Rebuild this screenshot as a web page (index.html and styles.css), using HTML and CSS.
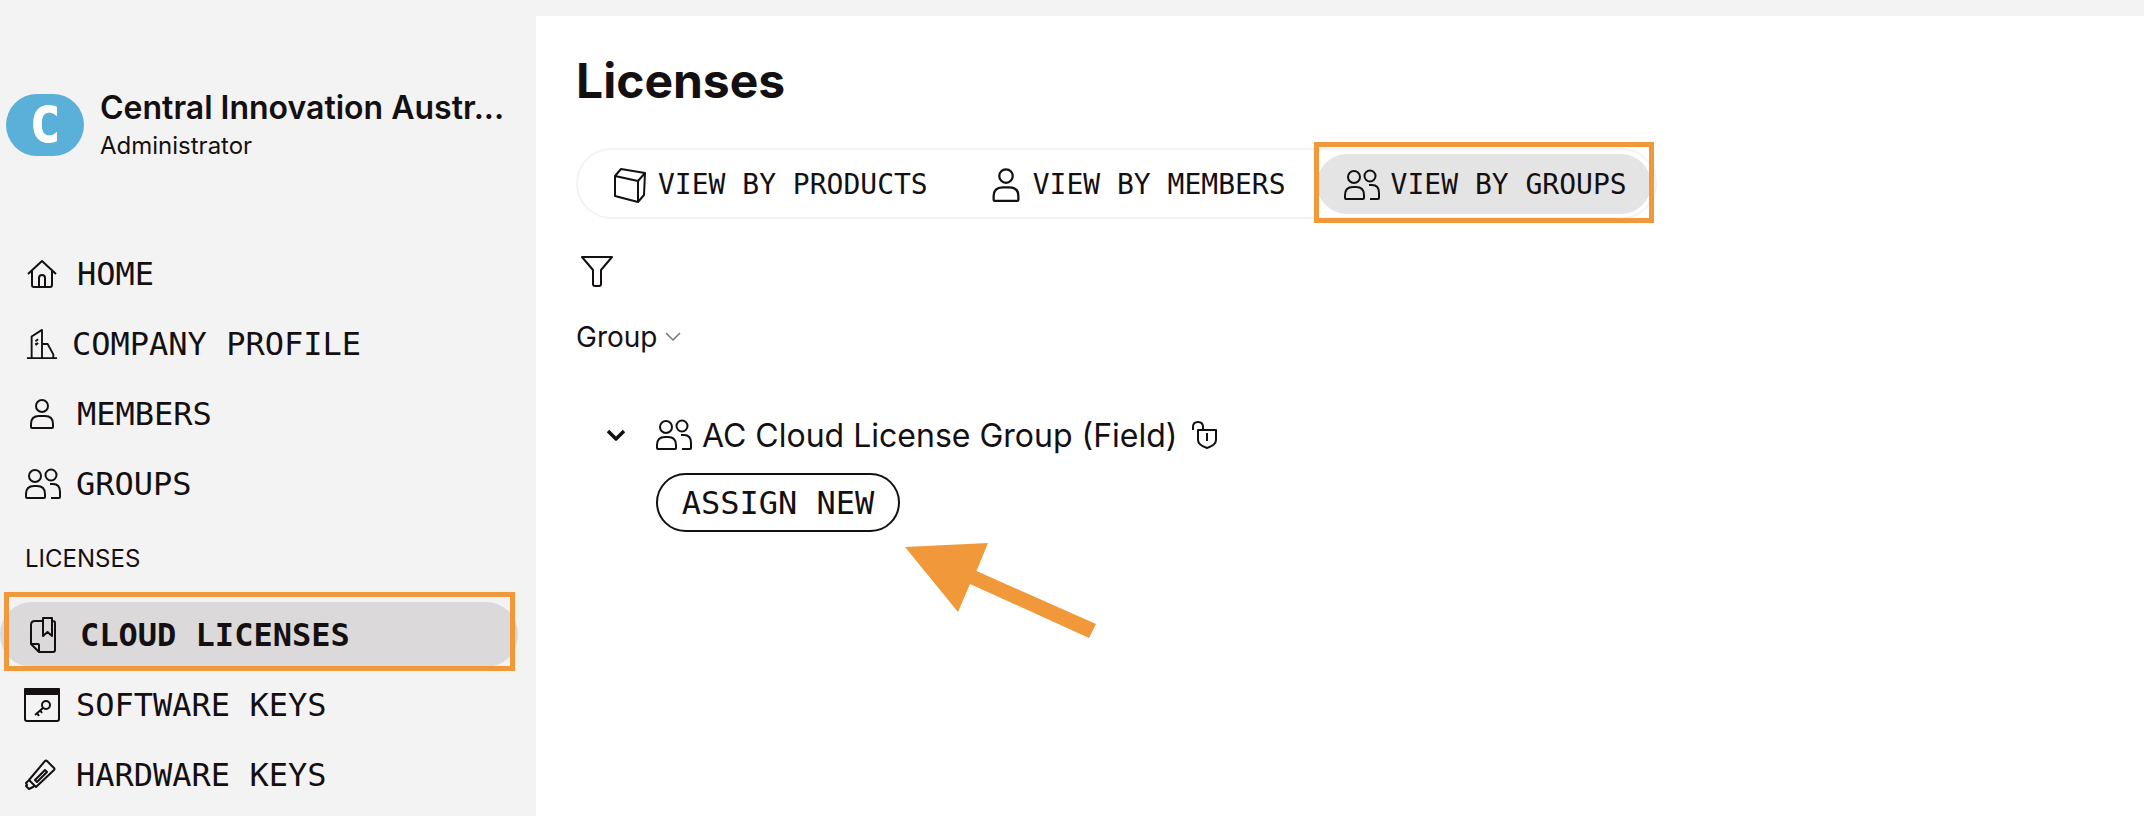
FILE: index.html
```html
<!DOCTYPE html>
<html lang="en">
<head>
    <meta charset="UTF-8">
    <title>Licenses</title>
    <link rel="stylesheet" href="styles.css">
</head>
<body>
    <div class="app">
        <aside class="sidebar">
            <div class="account">
                <div class="avatar">C</div>
                <div class="account-text">
                    <div class="account-name">Central Innovation Austr...</div>
                    <div class="account-role">Administrator</div>
                </div>
            </div>
            <nav class="nav">
                <a class="nav-item">
                    <svg class="icon" viewBox="0 0 32 32"><path d="M2 16 16 3l14 13M6 13v14q0 2 2 2h16q2 0 2-2V13M13 29v-9q0-3 3-3t3 3v9"/></svg>
                    HOME
                </a>
                <a class="nav-item nav-item-tight">
                    <svg class="icon icon-wide" viewBox="0 0 34 32"><path d="M1 31h32M6 31V8L17 1v30M17 16l6 0 6 11v4M10 13l3-2M10 17l3-2M10 15l2 2"/></svg>
                    COMPANY PROFILE
                </a>
                <a class="nav-item">
                    <svg class="icon" viewBox="0 0 32 32"><circle cx="16" cy="8" r="6"/><path d="M5 29v-3q0-8 8-8h6q8 0 8 8v3q0 1-1 1H6q-1 0-1-1z"/></svg>
                    MEMBERS
                </a>
                <a class="nav-item nav-item-wide">
                    <svg class="icon-groups" viewBox="0 0 38 32"><circle cx="11" cy="8" r="6"/><circle cx="27" cy="7" r="5.5"/><path d="M2 29v-3q0-8 8-8h3q8 0 8 8v3q0 1-1 1H3q-1 0-1-1zM26 16h3q7 0 7 8v5q0 1-1 1h-8"/></svg>
                    GROUPS
                </a>
                <div class="nav-heading">LICENSES</div>
                <a class="nav-item nav-item-active">
                    <svg class="icon-book" viewBox="0 0 26 36"><path d="M13 4H5Q1 4 1 8v19l8 8h14q2 0 2-2V6q0-2-2-2h-1M9 35v-7q0-1-1-1H1M13 1h9v18l-4.500-4-4.500 4z"/></svg>
                    CLOUD LICENSES
                </a>
                <a class="nav-item nav-item-software">
                    <svg class="icon-window" viewBox="0 0 36 34"><rect x="1" y="1" width="34" height="32" rx="2"/><path class="icon-bar" d="M1 1h34v5H1z"/><circle cx="22" cy="17" r="4"/><path d="m19 20-8 7M13 25l2 3M16 22l2 3"/></svg>
                    SOFTWARE KEYS
                </a>
                <a class="nav-item nav-item-hardware">
                    <svg class="icon" viewBox="0 0 32 32"><path d="m23 2 7 7q1 1 0 2L12 28l-7-7L21 2q1-1 2 0zM5 21l-3 3 1 2-1 1 3 3 2-1 2-1 2-2M11 21l10-10 2 2-10 10z"/></svg>
                    HARDWARE KEYS
                </a>
            </nav>
        </aside>
        <main class="content">
            <h1 class="title">Licenses</h1>
            <div class="tabs">
                <a class="tab tab-products">
                    <svg class="icon-tab" viewBox="0 0 36 36"><path d="M9 2 33 6l-1 22-6 7L3 29V9zM3 9l23 5 7-8M26 14v21"/></svg>
                    VIEW BY PRODUCTS
                </a>
                <a class="tab tab-members">
                    <svg class="icon-tab" viewBox="0 0 32 32"><circle cx="16" cy="8" r="6"/><path d="M5 29v-3q0-8 8-8h6q8 0 8 8v3q0 1-1 1H6q-1 0-1-1z"/></svg>
                    VIEW BY MEMBERS
                </a>
                <a class="tab tab-active">
                    <svg class="icon-groups" viewBox="0 0 38 32"><circle cx="11" cy="8" r="6"/><circle cx="27" cy="7" r="5.5"/><path d="M2 29v-3q0-8 8-8h3q8 0 8 8v3q0 1-1 1H3q-1 0-1-1zM26 16h3q7 0 7 8v5q0 1-1 1h-8"/></svg>
                    VIEW BY GROUPS
                </a>
            </div>
            <svg class="icon-filter" viewBox="0 0 32 32"><path d="M1 2h30L20 15v14q0 2-2 2h-4q-2 0-2-2V15z"/></svg>
            <div class="sort">Group
                <svg class="sort-chevron" viewBox="0 0 16 10"><path d="m1 1 7 7 7-7"/></svg>
            </div>
            <div class="group-row">
                <svg class="row-chevron" viewBox="0 0 20 12"><path d="m2 2 8 8 8-8"/></svg>
                <svg class="icon-groups" viewBox="0 0 38 32"><circle cx="11" cy="8" r="6"/><circle cx="27" cy="7" r="5.5"/><path d="M2 29v-3q0-8 8-8h3q8 0 8 8v3q0 1-1 1H3q-1 0-1-1zM26 16h3q7 0 7 8v5q0 1-1 1h-8"/></svg>
                <span class="group-name">AC Cloud License Group (Field)</span>
                <svg class="icon-lock" viewBox="0 0 26 28"><path d="M1 9V6q0-5 5-5t5 5v3M6 9h18v10q0 5-9 8-9-3-9-8zM15 12v8"/></svg>
            </div>
            <button class="assign">ASSIGN NEW</button>
        </main>
    </div>

    <!-- annotations on top of the screenshot -->
    <div class="mark mark-nav"></div>
    <div class="mark mark-tab"></div>
    <svg class="arrow" viewBox="0 0 200 100"><path d="M0 5 83 1 71.500 29 191 82 184 96 65 42 53 70z"/></svg>
</body>
</html>
```
FILE: styles.css
```css
* {
    box-sizing: border-box;
}
html, body {
    margin: 0;
    height: 100%;
    overflow: hidden;
}
body {
    background-color: #f3f3f3;
    color: #141012;
    font-family: Inter, sans-serif;
    padding-top: 16px;
}
.app {
    display: flex;
    height: 800px;
}
svg {
    fill: none;
    stroke: #141012;
    stroke-width: 2;
    stroke-linejoin: round;
    flex: none;
}

/* sidebar */
.sidebar {
    width: 536px;
    flex: none;
    padding-top: 72px;
}
.account {
    display: flex;
    align-items: center;
    gap: 16px;
    padding-left: 6px;
}
.avatar {
    width: 78px;
    height: 62px;
    border-radius: 31px;
    background-color: #5bb0d9;
    color: #fff;
    font-family: "DejaVu Sans Mono", monospace;
    font-weight: 700;
    font-size: 50px;
    -webkit-text-stroke: 1px #fff;
    display: flex;
    align-items: center;
    justify-content: center;
}
.account-name {
    font-size: 32px;
    font-weight: 600;
    line-height: 38px;
    padding-top: 1px;
}
.account-role {
    font-size: 24px;
    line-height: 32px;
    padding-top: 3px;
}
.nav {
    margin-top: 77px;
    font-family: "DejaVu Sans Mono", monospace;
    font-size: 32px;
}
.nav-item {
    display: flex;
    align-items: center;
    gap: 19px;
    height: 70px;
    padding-left: 26px;
}
.nav-item-tight {
    gap: 14px;
}
.nav-item-wide {
    padding-left: 24px;
    gap: 14px;
}
.nav-heading {
    font-family: Inter, sans-serif;
    font-size: 24px;
    height: 50px;
    line-height: 50px;
    padding-left: 25px;
    margin-top: 15px;
}
.nav-item-active {
    height: 65px;
    margin-top: 18px;
    margin-bottom: 3px;
    padding-left: 30px;
    gap: 24px;
    width: 518px;
    border-radius: 32px;
    background-color: #dbd9da;
    font-weight: 700;
}
.nav-item-software {
    gap: 16px;
    padding-left: 24px;
}
.nav-item-hardware {
    gap: 20px;
    padding-left: 24px;
}
.icon {
    width: 32px;
    height: 32px;
}
.icon-window {
    width: 36px;
    height: 34px;
}
.icon-bar {
    fill: #141012;
}
.icon-book {
    width: 26px;
    height: 36px;
}
.icon-groups {
    width: 38px;
    height: 32px;
}

/* main */
.content {
    flex: 1;
    background-color: #fff;
    padding-left: 40px;
}
.title {
    margin: 0;
    font-size: 48px;
    font-weight: 700;
    line-height: 56px;
    padding-top: 37px;
    height: 93px;
}
.tabs {
    display: inline-flex;
    align-items: center;
    margin-top: 39px;
    height: 71px;
    border: 2px solid #f3f3f3;
    border-radius: 36px;
    padding-left: 34px;
    padding-right: 4px;
    font-family: "DejaVu Sans Mono", monospace;
    font-size: 28px;
}
.tab {
    display: flex;
    align-items: center;
    gap: 10px;
    height: 60px;
    padding-top: 2px;
}
.tab-products {
    padding-right: 60px;
}
.tab-members {
    padding-right: 31px;
    gap: 9px;
}
.tab-active {
    background-color: #e4e4e4;
    border-radius: 30px;
    padding: 2px 24px 0 26px;
}
.icon-tab {
    width: 36px;
    height: 36px;
}
.icon-filter {
    display: block;
    width: 32px;
    height: 32px;
    margin: 36px 0 0 5px;
}
.sort {
    display: flex;
    align-items: center;
    gap: 8px;
    font-size: 28px;
    height: 40px;
    margin-top: 30px;
}
.sort-chevron {
    width: 16px;
    height: 10px;
    stroke: #777;
    stroke-width: 1.5;
}
.group-row {
    display: flex;
    align-items: center;
    height: 40px;
    margin-top: 58px;
    padding-left: 30px;
    font-size: 32px;
}
.row-chevron {
    width: 20px;
    height: 12px;
    stroke-width: 3.5;
    margin-right: 29px;
}
.group-name {
    margin-left: 9px;
    white-space: nowrap;
}
.icon-lock {
    width: 26px;
    height: 28px;
    margin-left: 14px;
}
.assign {
    display: block;
    margin: 18px 0 0 80px;
    width: 244px;
    height: 59px;
    border: 2px solid #141012;
    border-radius: 30px;
    background: #fff;
    color: #141012;
    font-family: "DejaVu Sans Mono", monospace;
    font-size: 32px;
    padding: 0;
}

/* orange annotations */
.mark {
    position: absolute;
    border: 5px solid #f0983a;
}
.mark-nav {
    left: 4px;
    top: 592px;
    width: 511px;
    height: 79px;
}
.mark-tab {
    left: 1314px;
    top: 142px;
    width: 340px;
    height: 81px;
}
.arrow {
    position: absolute;
    left: 905px;
    top: 542px;
    stroke: none;
    fill: #f0983a;
    width: 200px;
    height: 100px;
}
```
